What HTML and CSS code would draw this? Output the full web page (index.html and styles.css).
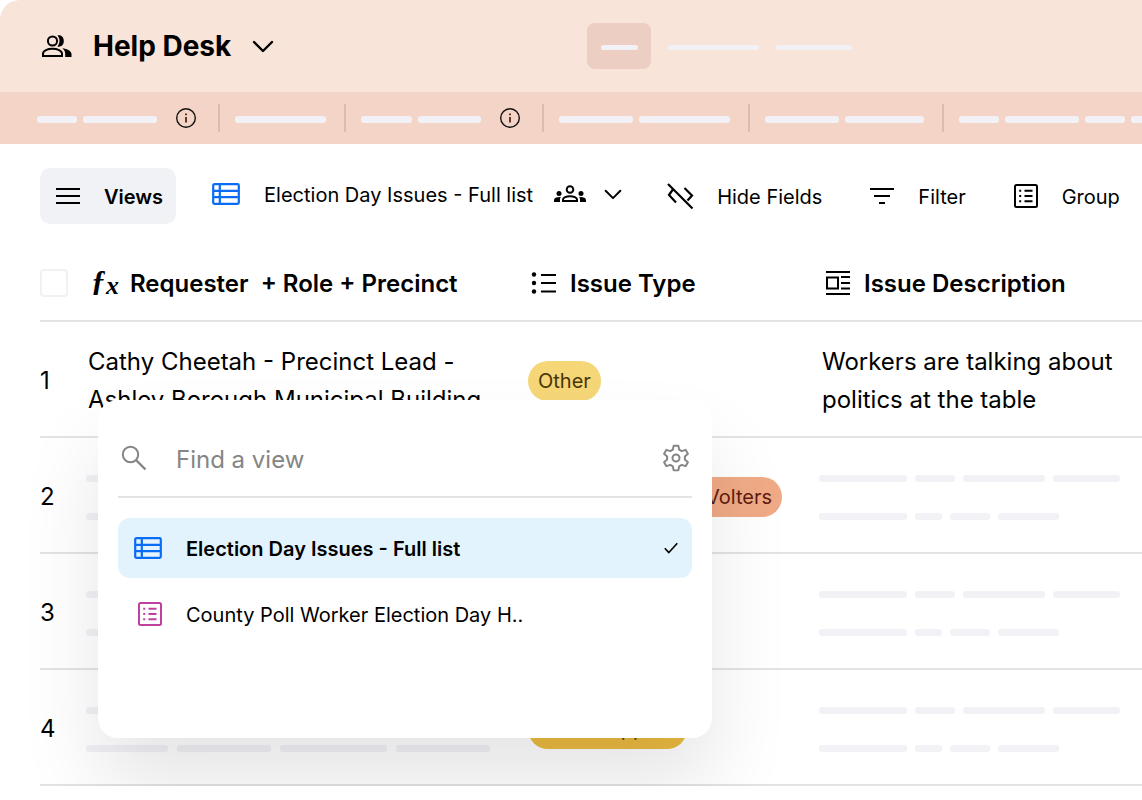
FILE: index.html
```html
<!DOCTYPE html>
<html lang="en">
<head>
  <meta charset="UTF-8">
  <meta name="viewport" content="width=device-width, initial-scale=1">
  <title>Help Desk</title>
  <link rel="stylesheet" href="styles.css">
</head>
<body>

  <!-- icons used more than once -->
  <svg class="sprite" width="0" height="0" aria-hidden="true">
    <symbol id="icon-chevron" viewBox="0 0 22 22">
      <path d="M2 7l9 9 9-9" fill="none" stroke="currentColor" stroke-width="2.4" stroke-linecap="round" stroke-linejoin="round"/>
    </symbol>
    <symbol id="icon-info" viewBox="0 0 20 20">
      <circle cx="10" cy="10" r="9.3" fill="none" stroke="#111" stroke-width="1.4"/>
      <path d="M10 9v5.5M10 5.6v1.6" stroke="#4a1a12" stroke-width="1.7"/>
    </symbol>
    <symbol id="icon-grid" viewBox="0 0 28 22">
      <path d="M2.5 1.2h23a1.3 1.3 0 0 1 1.3 1.3v17a1.3 1.3 0 0 1-1.3 1.3h-23a1.3 1.3 0 0 1-1.3-1.3v-17a1.3 1.3 0 0 1 1.3-1.3zM7.8 1v20M1 7.8h26M1 14.2h26" fill="none" stroke="currentColor" stroke-width="2.2"/>
    </symbol>
    <symbol id="icon-list-box" viewBox="0 0 24 24">
      <rect x="1" y="1" width="22" height="22" rx="1.5" fill="none" stroke="currentColor" stroke-width="2"/>
      <path d="M5.2 6.7h2M5.2 12h2M5.2 17.3h2M10.5 6.7h8M10.5 12h8M10.5 17.3h8" stroke="currentColor" stroke-width="1.9"/>
    </symbol>
  </svg>

  <header class="topbar">
    <button class="base" type="button">
      <svg class="base-icon" width="32" height="24" viewBox="0 0 32 24" aria-hidden="true">
        <circle cx="12.5" cy="7" r="4.6" fill="none" stroke="currentColor" stroke-width="2"/>
        <path d="M3 22v-2.2c0-3 4.6-5 9.5-5s9.5 2 9.5 5V22z" fill="none" stroke="currentColor" stroke-width="2"/>
        <path d="M17.5 1.6c2-.8 6.3.2 6.3 5.4s-4.3 6.2-6.3 5.4c2.7-3 2.7-7.8 0-10.8z" fill="currentColor"/>
        <path d="M22.3 14.2c5 .8 9.2 2.6 9.2 5.8v3h-6.3v-3c0-2.5-1-4.4-2.9-5.8z" fill="currentColor"/>
      </svg>
      <span>Help Desk</span>
      <svg width="22" height="22" aria-hidden="true"><use href="#icon-chevron"/></svg>
    </button>
    <nav class="sections" aria-label="Sections">
      <span class="section active"><i class="bar w-37"></i></span>
      <i class="bar w-90"></i>
      <i class="bar w-76"></i>
    </nav>
  </header>

  <ul class="tabs">
    <li><i class="bar w-40"></i><i class="bar w-74"></i><svg class="info" width="20" height="20" aria-hidden="true"><use href="#icon-info"/></svg></li>
    <li><i class="bar w-90"></i></li>
    <li><i class="bar w-50"></i><i class="bar w-63"></i><svg class="info" width="20" height="20" aria-hidden="true"><use href="#icon-info"/></svg></li>
    <li><i class="bar w-74"></i><i class="bar w-90"></i></li>
    <li><i class="bar w-74"></i><i class="bar w-79"></i></li>
    <li><i class="bar w-40"></i><i class="bar w-74"></i><i class="bar w-40"></i><i class="bar w-74"></i></li>
  </ul>

  <main class="workspace">
    <div class="toolbar">
      <button class="views" type="button">
        <svg width="24" height="18" viewBox="0 0 24 18" aria-hidden="true"><path d="M0 2h24M0 9h24M0 16h24" stroke="currentColor" stroke-width="2"/></svg>
        <span>Views</span>
      </button>
      <button class="current-view" type="button">
        <svg class="blue" width="28" height="22" aria-hidden="true"><use href="#icon-grid"/></svg>
        <span>Election Day Issues - Full list</span>
        <svg class="people" width="32" height="18" viewBox="0 0 32 18" aria-hidden="true">
          <circle cx="16" cy="4.5" r="3.3" fill="none" stroke="currentColor" stroke-width="2"/>
          <path d="M9 16v-1.4c0-2 3.3-3.4 7-3.4s7 1.4 7 3.4V16z" fill="none" stroke="currentColor" stroke-width="2"/>
          <circle cx="5" cy="8.5" r="2.5" fill="currentColor"/>
          <circle cx="27" cy="8.5" r="2.5" fill="currentColor"/>
          <path d="M0 17v-2c0-2.2 2.8-3.2 6.8-3-.6.8-.8 1.6-.8 2.6V17zM32 17v-2c0-2.2-2.8-3.2-6.8-3 .6.8.8 1.6.8 2.6V17z" fill="currentColor"/>
        </svg>
        <svg width="18" height="18" aria-hidden="true"><use href="#icon-chevron"/></svg>
      </button>
      <button class="tool" type="button">
        <svg width="28" height="28" viewBox="0 0 28 28" aria-hidden="true"><path d="M2 2l24.5 24.5M6.500 8L3 13l7 7.500M18.500 6l7.500 7.500-4.500 5" fill="none" stroke="currentColor" stroke-width="2.2"/></svg>
        <span>Hide Fields</span>
      </button>
      <button class="tool" type="button">
        <svg width="24" height="18" viewBox="0 0 24 18" aria-hidden="true"><path d="M0 2h24M4 9h16M9 16h6" stroke="currentColor" stroke-width="2"/></svg>
        <span>Filter</span>
      </button>
      <button class="tool" type="button">
        <svg width="24" height="24" aria-hidden="true"><use href="#icon-list-box"/></svg>
        <span>Group</span>
      </button>
    </div>

    <table class="records">
      <colgroup>
        <col class="col-number">
        <col class="col-requester">
        <col class="col-type">
        <col>
      </colgroup>
      <thead>
        <tr>
          <th scope="col"><input class="check" type="checkbox" aria-label="Select all"></th>
          <th scope="col">
            <div class="field">
              <svg width="32" height="32" viewBox="0 0 32 32" aria-hidden="true"><text class="fx" x="3" y="23" font-size="30">ƒ</text><text class="fx" x="18" y="27" font-size="26">x</text></svg>
              <span>Requester&nbsp; + Role + Precinct</span>
            </div>
          </th>
          <th scope="col">
            <div class="field">
              <svg width="32" height="32" viewBox="0 0 32 32" aria-hidden="true">
                <circle cx="6" cy="7.5" r="2.2"/><circle cx="6" cy="16" r="2.2"/><circle cx="6" cy="24.5" r="2.2"/>
                <path d="M13 8h15M13 16h15M13 24.5h15" stroke="#000" stroke-width="2"/>
              </svg>
              <span>Issue Type</span>
            </div>
          </th>
          <th scope="col">
            <div class="field">
              <svg width="32" height="32" viewBox="0 0 32 32" aria-hidden="true">
                <path d="M4 5h24M4 27h24" stroke="#000" stroke-width="2"/>
                <path d="M5 10.5h11v11H5zM19 10h9M19 16h9M19 21.5h9" fill="none" stroke="#000" stroke-width="2"/>
              </svg>
              <span>Issue Description</span>
            </div>
          </th>
        </tr>
      </thead>
      <tbody>
        <tr>
          <td>1</td>
          <td>Cathy Cheetah - Precinct Lead -<br>Ashley Borough Municipal Building</td>
          <td><span class="tag yellow">Other</span></td>
          <td>Workers are talking about<br>politics at the table</td>
        </tr>
        <tr>
          <td>2</td>
          <td>
            <div class="line wide"><i class="bar w-82"></i><i class="bar w-93"></i><i class="bar w-107"></i><i class="bar w-93"></i></div>
            <div class="line wide"><i class="bar w-82"></i><i class="bar w-93"></i><i class="bar w-107"></i><i class="bar w-93"></i></div>
          </td>
          <td><span class="tag orange">Volters</span></td>
          <td>
            <div class="line"><i class="bar w-88"></i><i class="bar w-40"></i><i class="bar w-82"></i><i class="bar w-67"></i></div>
            <div class="line"><i class="bar w-88"></i><i class="bar w-27"></i><i class="bar w-40"></i><i class="bar w-61"></i></div>
          </td>
        </tr>
        <tr>
          <td>3</td>
          <td>
            <div class="line wide"><i class="bar w-82"></i><i class="bar w-93"></i><i class="bar w-107"></i><i class="bar w-93"></i></div>
            <div class="line wide"><i class="bar w-82"></i><i class="bar w-93"></i><i class="bar w-107"></i><i class="bar w-93"></i></div>
          </td>
          <td></td>
          <td>
            <div class="line"><i class="bar w-88"></i><i class="bar w-40"></i><i class="bar w-82"></i><i class="bar w-67"></i></div>
            <div class="line"><i class="bar w-88"></i><i class="bar w-27"></i><i class="bar w-40"></i><i class="bar w-61"></i></div>
          </td>
        </tr>
        <tr>
          <td>4</td>
          <td>
            <div class="line wide"><i class="bar w-82"></i><i class="bar w-93"></i><i class="bar w-107"></i><i class="bar w-93"></i></div>
            <div class="line wide"><i class="bar w-82"></i><i class="bar w-93"></i><i class="bar w-107"></i><i class="bar w-93"></i></div>
          </td>
          <td><span class="tag amber">Ballot Supplies</span></td>
          <td>
            <div class="line"><i class="bar w-88"></i><i class="bar w-40"></i><i class="bar w-82"></i><i class="bar w-67"></i></div>
            <div class="line"><i class="bar w-88"></i><i class="bar w-27"></i><i class="bar w-40"></i><i class="bar w-61"></i></div>
          </td>
        </tr>
      </tbody>
    </table>

    <!-- view switcher, opens over the table -->
    <section class="view-menu" aria-label="Views">
      <div class="search">
        <label for="find-view" aria-label="Find a view">
          <svg width="28" height="28" viewBox="0 0 28 28" aria-hidden="true"><circle cx="10.5" cy="10.5" r="7.7" fill="none" stroke="currentColor" stroke-width="2"/><path d="M16 16l9.5 9.5" stroke="currentColor" stroke-width="2.4"/></svg>
        </label>
        <input id="find-view" type="text" placeholder="Find a view">
        <button class="settings" type="button" aria-label="Settings">
          <svg width="28" height="28" viewBox="0 0 24 24" fill="none" stroke="currentColor" stroke-width="1.7" stroke-linejoin="round" aria-hidden="true">
            <circle cx="12" cy="12" r="3"/>
            <path d="M10 1.4h4l.7 3.4 2.2 1.3 3.3-1.1 2 3.4-2.6 2.3v2.6l2.6 2.3-2 3.4-3.3-1.1-2.2 1.3-.7 3.4h-4l-.7-3.4-2.2-1.3L3.8 19l-2-3.4 2.6-2.3v-2.6L1.8 8.4l2-3.4 3.3 1.1 2.2-1.3z"/>
          </svg>
        </button>
      </div>
      <ul class="view-list">
        <li>
          <button class="view-item selected" type="button">
            <svg class="blue" width="28" height="22" aria-hidden="true"><use href="#icon-grid"/></svg>
            <span>Election Day Issues - Full list</span>
            <svg class="tick" width="14" height="12" viewBox="0 0 14 12" aria-hidden="true"><path d="M.8 6.2l4 4.3L13.3 1.3" fill="none" stroke="currentColor" stroke-width="1.6"/></svg>
          </button>
        </li>
        <li>
          <button class="view-item" type="button">
            <svg class="pink" width="32" height="24" aria-hidden="true"><use href="#icon-list-box"/></svg>
            <span>County Poll Worker Election Day H..</span>
          </button>
        </li>
      </ul>
    </section>
  </main>

</body>
</html>
```

FILE: styles.css
```css
* {
  box-sizing: border-box;
}

body {
  margin: 0;
  font-family: Inter, "Liberation Sans", sans-serif;
  font-size: 20px;
  line-height: 24px;
  color: #000;
  background: #fff;
  overflow-x: hidden;
}

button {
  display: flex;
  align-items: center;
  flex-shrink: 0;
  padding: 0;
  border: none;
  background: none;
  font: inherit;
  color: inherit;
  white-space: nowrap;
  cursor: pointer;
}

svg {
  flex-shrink: 0;
}

ul {
  margin: 0;
  padding: 0;
  list-style: none;
}

.sprite {
  position: absolute;
}

/* placeholder bars */
.bar {
  flex-shrink: 0;
  height: 7px;
  margin-top: 2px;
  border-radius: 3px;
  background: #f2f2f6;
}

.w-27 { width: 27px; }
.w-37 { width: 37px; }
.w-40 { width: 40px; }
.w-50 { width: 51px; }
.w-61 { width: 61px; }
.w-63 { width: 63px; }
.w-67 { width: 67px; }
.w-74 { width: 74px; }
.w-76 { width: 76px; }
.w-79 { width: 79px; }
.w-82 { width: 82px; }
.w-88 { width: 88px; }
.w-90 { width: 91px; }
.w-93 { width: 94px; }
.w-107 { width: 107px; }

/* top bar */
.topbar {
  display: flex;
  align-items: center;
  height: 92px;
  padding-left: 40px;
  background: #f8e4d8;
  border-top-left-radius: 20px;
}

.base {
  min-width: 547px;
  gap: 21px;
  font-size: 28px;
  font-weight: 700;
  line-height: 36px;
}

.sections {
  display: flex;
  align-items: center;
  gap: 17px;
}

.sections .bar {
  height: 5px;
}

.section.active {
  display: flex;
  align-items: center;
  justify-content: center;
  width: 64px;
  height: 46px;
  border-radius: 8px;
  background: #eccec2;
}

.tabs {
  display: flex;
  align-items: center;
  height: 52px;
  padding-left: 22px;
  background: #f3d4c7;
  overflow: hidden;
}

.tabs li {
  display: flex;
  align-items: center;
  flex-shrink: 0;
  gap: 6px;
  height: 28px;
  padding: 0 18px 0 15px;
  border-right: 2px solid #dcbbb0;
}

.tabs .info {
  margin: 0 4px 0 13px;
}

/* toolbar */
.workspace {
  position: relative;
}

.toolbar {
  display: flex;
  align-items: center;
  height: 102px;
  padding: 2px 0 0 40px;
}

.toolbar span,
.field span,
.view-item span {
  padding-top: 2px;
}

.views {
  gap: 24px;
  height: 56px;
  padding: 0 13px 0 16px;
  border-radius: 10px;
  background: #f1f2f5;
  font-weight: 600;
}

.current-view {
  margin-left: 36px;
  padding-bottom: 4px;
}

.current-view span {
  margin: 0 21px 0 24px;
}

.current-view .people {
  margin-right: 18px;
}

.tool {
  gap: 24px;
  margin-left: 48px;
}

.current-view + .tool {
  gap: 23px;
  margin-left: 44px;
}

.blue {
  color: #0a6cf5;
}

.pink {
  color: #c040a0;
}

/* records table */
.records {
  width: calc(100% - 40px);
  margin-left: 40px;
  border-collapse: separate;
  border-spacing: 0;
  table-layout: fixed;
  font-size: 24px;
  line-height: 38px;
}

.col-number { width: 48px; }
.col-requester { width: 440px; }
.col-type { width: 294px; }

.records th {
  height: 76px;
  padding: 0;
  border-bottom: 2px solid #e3e3e4;
  font-weight: 600;
  text-align: left;
}

.records td {
  height: 116px;
  padding: 3px 0 0;
  border-bottom: 2px solid #e3e3e4;
  white-space: nowrap;
}

.field {
  display: flex;
  align-items: center;
  gap: 10px;
  white-space: nowrap;
}

.field svg {
  overflow: visible;
}

.fx {
  font-family: "Liberation Serif", serif;
  font-style: italic;
  font-weight: 700;
}

.check {
  display: block;
  width: 28px;
  height: 28px;
  margin: 0;
  appearance: none;
  border: 2px solid #f1f1f2;
  border-radius: 4px;
  background: #fff;
}

.line {
  display: flex;
  align-items: center;
  gap: 8px;
  height: 38px;
  margin-left: -3px;
}

.line.wide {
  gap: 9px;
  margin-left: -2px;
}

.tag {
  display: flex;
  align-items: center;
  width: fit-content;
  height: 40px;
  padding: 0 10px;
  border-radius: 20px;
  font-size: 20px;
}

.tag.yellow {
  background: #f5d778;
  color: #4a3608;
}

.tag.orange {
  justify-content: flex-end;
  min-width: 254px;
  background: #f0aa86;
  color: #601c10;
}

.tag.amber {
  background: #edbb41;
  color: #4a3608;
}

/* view switcher */
.view-menu {
  position: absolute;
  top: 256px;
  left: 98px;
  width: 614px;
  max-width: calc(100% - 98px);
  min-height: 338px;
  padding: 20px;
  border-radius: 20px;
  background: #fff;
  box-shadow: 0 48px 80px rgba(0, 0, 20, 0.1);
}

.search {
  display: flex;
  align-items: center;
  height: 78px;
  padding: 0 2px;
  border-bottom: 2px solid #e3e3e4;
  color: #858585;
}

.search label {
  display: flex;
}

.search input {
  flex: 1;
  min-width: 0;
  margin-left: 28px;
  padding: 2px 0 0;
  border: none;
  outline: none;
  background: none;
  font: inherit;
  font-size: 24px;
}

.search input::placeholder {
  color: #858585;
  opacity: 1;
}

.view-list {
  display: flex;
  flex-direction: column;
  gap: 6px;
  padding-top: 20px;
}

.view-item {
  width: 100%;
  height: 60px;
  padding: 0 14px 0 16px;
  border-radius: 12px;
}

.view-item.selected {
  background: #e2f3fe;
  font-weight: 600;
}

.view-item span {
  margin-left: 24px;
}

.view-item .pink + span {
  margin-left: 20px;
}

.view-item .tick {
  margin-left: auto;
}
```
